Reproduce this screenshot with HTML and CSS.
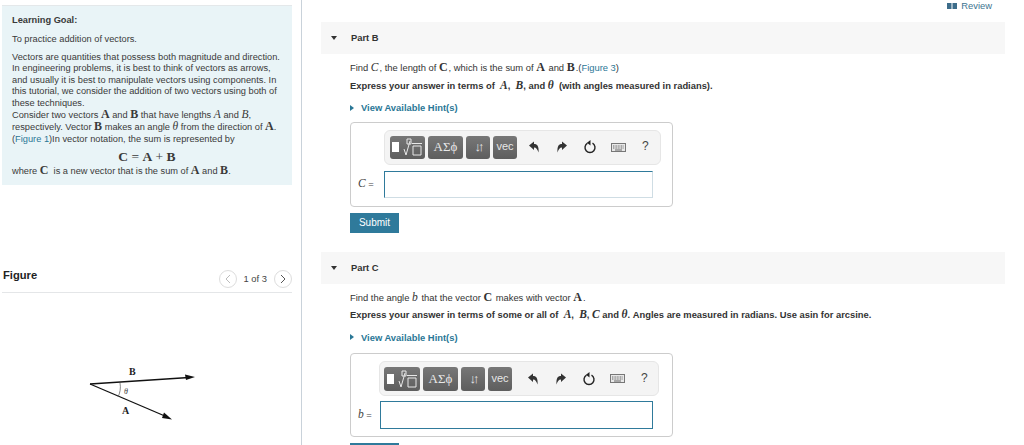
FILE: index.html
```html
<!DOCTYPE html>
<html lang="en">
  <head>
    <meta charset="UTF-8" />
    <meta name="viewport" content="width=device-width, initial-scale=1.0" />
    <title>Addition of vectors</title>
    <link rel="stylesheet" href="styles.css">
  </head>
  <body>
    <div class="page">
      <div class="left">
        <div class="goal">
          <p class="goal-title">Learning Goal:</p>
          <p class="goal-line">To practice addition of vectors.</p>
          <p class="goal-text">
            Vectors are quantities that possess both magnitude and direction.<br />
            In engineering problems, it is best to think of vectors as arrows,<br />
            and usually it is best to manipulate vectors using components. In<br />
            this tutorial, we consider the addition of two vectors using both of<br />
            these techniques.<br />
            Consider two vectors <b class="vec">A</b> and <b class="vec">B</b> that have lengths <i class="var">A</i> and <i class="var">B</i>,<br />
            respectively. Vector <b class="vec">B</b> makes an angle <i class="var">θ</i> from the direction of <b class="vec">A</b>.<br />
            (<a href="#">Figure 1</a>)In vector notation, the sum is represented by
          </p>
          <p class="equation"><b>C</b> = <b>A</b> + <b>B</b></p>
          <p class="goal-where">where <b class="vec">C</b> &nbsp;is a new vector that is the sum of <b class="vec">A</b> and <b class="vec">B</b>.</p>
        </div>
        <div class="figure-head">
          <span class="figure-title">Figure</span>
          <div class="pager">
            <span class="pager-btn">
              <svg width="8" height="10" viewBox="0 0 8 10"><path d="M6 1 2 5l4 4" fill="none" stroke="#bbb" stroke-width="1" /></svg>
            </span>
            <span class="pager-count">1 of 3</span>
            <span class="pager-btn">
              <svg width="8" height="10" viewBox="0 0 8 10"><path d="M2 1l4 4-4 4" fill="none" stroke="#555" stroke-width="1" /></svg>
            </span>
          </div>
        </div>
        <svg class="figure-img" width="292" height="150" viewBox="0 294 292 150">
          <path d="M88 385 187 378.500" stroke="#111" stroke-width="1.300" fill="none" />
          <path d="M193 378 183 375.500 184 381z" fill="#111" />
          <path d="M88 385 164 417.500" stroke="#111" stroke-width="1.300" fill="none" />
          <path d="M170 420.500 162 413.500 160 419z" fill="#111" />
          <path d="M118 384c1 5 0 10-2 14" stroke="#555" stroke-width=".7" fill="none" />
          <text x="127" y="376" class="fig-label">B</text>
          <text x="120" y="415" class="fig-label">A</text>
          <text x="122" y="395" class="fig-angle">θ</text>
        </svg>
      </div>

      <div class="right">
        <div class="review">
          <svg width="10" height="6" viewBox="0 0 10 6"><path d="M0 0h4.500v6H0zM5.500 0H10v6H5.500z" fill="#3d6d8a" /></svg>
          <span>Review</span>
        </div>

        <div class="part-bar">
          <span class="caret"></span>
          <span class="part-name">Part B</span>
        </div>
        <div class="part-body">
          <p class="question">Find <i class="var">C</i>, the length of <b class="vec">C</b>, which is the sum of <b class="vec">A</b> and <b class="vec">B</b>.(<a href="#">Figure 3</a>)</p>
          <p class="instruct">Express your answer in terms of &nbsp;<i class="var">A</i>, &nbsp;<i class="var">B</i>, and <i class="var">θ</i> &nbsp;(with angles measured in radians).</p>
          <p class="hint"><span class="hint-caret"></span>View Available Hint(s)</p>
          <div class="answer">
            <div class="toolbar">
              <span class="tool tool-tpl">
                <span class="tpl-block"></span>
                <svg width="22" height="18" viewBox="0 0 22 18">
                  <path d="M6 1h4v5H6zM11 5.500h10M3 11l2 6 4-14M12 8h8v9h-8z" fill="none" stroke="#e8e8e8" stroke-width="1" />
                </svg>
              </span>
              <span class="tool tool-sym">ΑΣϕ</span>
              <span class="tool tool-arrows">↓↑</span>
              <span class="tool tool-vec">vec</span>
              <span class="actions">
                <svg class="icon" width="14" height="14" viewBox="0 0 14 14"><path d="M2 5.500 7 1.500v2.500c3.500 0 5 2.500 4.500 8.500C10.500 9.500 9.500 7.500 7 7.500v2.500z" fill="#333" /></svg>
                <svg class="icon" width="14" height="14" viewBox="0 0 14 14"><path d="M12 5.500 7 1.500v2.500c-3.500 0-5 2.500-4.500 8.500C3.500 9.500 4.500 7.500 7 7.500v2.500z" fill="#333" /></svg>
                <svg class="icon" width="14" height="14" viewBox="0 0 14 14"><path d="M4.500 3.200a5 5 0 1 0 5 0" fill="none" stroke="#222" stroke-width="1.400" /><path d="M7.500 0v5.500L4 2.800z" fill="#222" /></svg>
                <svg class="icon" width="15" height="9" viewBox="0 0 15 9"><rect x=".5" y=".5" width="14" height="8" fill="#e8e8e8" stroke="#777" /><path d="M2 3h11M2 5h11" stroke="#666" stroke-dasharray="1 .6" /><path d="M4 7h7" stroke="#666" /></svg>
                <span class="help">?</span>
              </span>
            </div>
            <div class="answer-row">
              <span class="answer-label"><i class="var">C</i> =</span>
              <span class="answer-input"></span>
            </div>
          </div>
          <button class="submit">Submit</button>
        </div>

        <div class="part-bar part-c">
          <span class="caret"></span>
          <span class="part-name">Part C</span>
        </div>
        <div class="part-body">
          <p class="question">Find the angle <i class="var">b</i> that the vector <b class="vec">C</b> makes with vector <b class="vec">A</b>.</p>
          <p class="instruct">Express your answer in terms of some or all of &nbsp;<i class="var">A</i>, &nbsp;<i class="var">B</i>, <i class="var">C</i> and <i class="var">θ</i>. Angles are measured in radians. Use asin for arcsine.</p>
          <p class="hint"><span class="hint-caret"></span>View Available Hint(s)</p>
          <div class="answer answer-c">
            <div class="toolbar">
              <span class="tool tool-tpl">
                <span class="tpl-block"></span>
                <svg width="22" height="18" viewBox="0 0 22 18">
                  <path d="M6 1h4v5H6zM11 5.500h10M3 11l2 6 4-14M12 8h8v9h-8z" fill="none" stroke="#e8e8e8" stroke-width="1" />
                </svg>
              </span>
              <span class="tool tool-sym">ΑΣϕ</span>
              <span class="tool tool-arrows">↓↑</span>
              <span class="tool tool-vec">vec</span>
              <span class="actions">
                <svg class="icon" width="14" height="14" viewBox="0 0 14 14"><path d="M2 5.500 7 1.500v2.500c3.500 0 5 2.500 4.500 8.500C10.500 9.500 9.500 7.500 7 7.500v2.500z" fill="#333" /></svg>
                <svg class="icon" width="14" height="14" viewBox="0 0 14 14"><path d="M12 5.500 7 1.500v2.500c-3.500 0-5 2.500-4.500 8.500C3.500 9.500 4.500 7.500 7 7.500v2.500z" fill="#333" /></svg>
                <svg class="icon" width="14" height="14" viewBox="0 0 14 14"><path d="M4.500 3.200a5 5 0 1 0 5 0" fill="none" stroke="#222" stroke-width="1.400" /><path d="M7.500 0v5.500L4 2.800z" fill="#222" /></svg>
                <svg class="icon" width="15" height="9" viewBox="0 0 15 9"><rect x=".5" y=".5" width="14" height="8" fill="#e8e8e8" stroke="#777" /><path d="M2 3h11M2 5h11" stroke="#666" stroke-dasharray="1 .6" /><path d="M4 7h7" stroke="#666" /></svg>
                <span class="help">?</span>
              </span>
            </div>
            <div class="answer-row">
              <span class="answer-label"><i class="var">b</i> =</span>
              <span class="answer-input"></span>
            </div>
          </div>
          <button class="submit" aria-label="Submit"></button>
        </div>
      </div>
    </div>
  </body>
</html>
```

FILE: styles.css
```css
html,
body {
  margin: 0;
  height: 445px;
  overflow: hidden;
  background: #fff;
}

body {
  font-family: "Liberation Sans", Arial, sans-serif;
  font-size: 9.4px;
  line-height: 11.500px;
  color: #333;
}

p {
  margin: 0;
}

a {
  color: #2a7796;
  text-decoration: none;
}

.page {
  display: flex;
  height: 445px;
}

.left {
  width: 290px;
  margin-left: 2px;
  padding-top: 5px;
  padding-right: 9px;
  border-right: 1px solid #c9d2da;
  flex: none;
}

.vec {
  font-family: "Liberation Serif", serif;
  font-weight: bold;
  font-size: 12px;
  line-height: 10px;
}

.var {
  font-family: "Liberation Serif", serif;
  font-style: italic;
  font-size: 11.500px;
  line-height: 10px;
}

.goal {
  height: 170px;
  padding: 9px 0 0 10px;
  background: #e9f4f7;
  border-top: 1px solid #e4e8ea;
  color: #3a3a3a;
  font-size: 9.25px;
}

.goal-title {
  font-weight: bold;
}

.goal-line {
  margin-top: 7px;
}

.goal-text {
  margin-top: 7px;
  line-height: 11.400px;
}

.equation {
  margin-top: 5px;
  padding-right: 10px;
  text-align: center;
  font-family: "Liberation Serif", serif;
  font-size: 13.500px;
  line-height: 13px;
}

.goal-where {
  margin-top: 2px;
}

.figure-head {
  display: flex;
  align-items: center;
  justify-content: space-between;
  height: 27px;
  margin-top: 80px;
  padding-left: 1px;
  border-bottom: 1px solid #e4e6e8;
}

.figure-title {
  margin-bottom: 5px;
  font-size: 11.200px;
  font-weight: bold;
  color: #222;
}

.pager {
  display: flex;
  align-items: center;
  gap: 7px;
}

.pager-count {
  color: #444;
}

.pager-btn {
  display: flex;
  align-items: center;
  justify-content: center;
  box-sizing: border-box;
  width: 18px;
  height: 18px;
  border: 1px solid #ddd;
  border-radius: 50%;
}

.figure-img {
  display: block;
}

.fig-label {
  font-family: "Liberation Serif", serif;
  font-size: 10px;
  font-weight: bold;
  fill: #222;
}

.fig-angle {
  font-family: "Liberation Serif", serif;
  font-size: 8px;
  font-style: italic;
  fill: #444;
}

.right {
  flex: 1;
  padding: 0 19px 0 19px;
}

.review {
  display: flex;
  align-items: center;
  justify-content: flex-end;
  gap: 4px;
  height: 22px;
  padding: 0 13px 10px 0;
  box-sizing: border-box;
  color: #3d7490;
}

.part-bar {
  display: flex;
  align-items: center;
  height: 32px;
  background: #f7f7f7;
  color: #333;
  font-weight: bold;
}

.part-c {
  margin-top: 19px;
}

.caret {
  width: 0;
  height: 0;
  margin: 0 13px 0 10px;
  border-left: 3.500px solid transparent;
  border-right: 3.500px solid transparent;
  border-top: 4px solid #333;
}

.part-name {
  margin-left: 1px;
}

.part-body {
  padding: 8px 0 0 29px;
}

.question {
  height: 11.500px;
}

.question .vec,
.question .var {
  margin-right: 1px;
}

.instruct {
  margin-top: 6px;
  font-weight: bold;
}

.hint {
  display: flex;
  align-items: center;
  margin-top: 11px;
  color: #2a7796;
  font-weight: bold;
}

.hint-caret {
  width: 0;
  height: 0;
  margin-right: 7px;
  border-top: 3.500px solid transparent;
  border-bottom: 3.500px solid transparent;
  border-left: 4px solid #2a7796;
}

.answer {
  box-sizing: border-box;
  width: 323px;
  height: 85px;
  margin-top: 8px;
  padding: 7px 19px 0 33px;
  border: 1px solid #ccc;
  border-radius: 4px;
}

.toolbar {
  display: flex;
  align-items: center;
  box-sizing: border-box;
  width: 277px;
  height: 35px;
  padding-left: 5px;
  gap: 3px;
  background: #f4f4f4;
  border: 1px solid #e6e6e6;
  border-radius: 6px;
}

.tool {
  display: flex;
  align-items: center;
  justify-content: center;
  height: 23px;
  border-radius: 3px;
  background: linear-gradient(#777, #5e5e5e);
  color: #e8e8e8;
}

.tool-tpl {
  width: 35px;
  gap: 2px;
}

.tpl-block {
  width: 7px;
  height: 10px;
  background: #fff;
}

.tool-sym {
  width: 35px;
  font-family: "Liberation Serif", serif;
  font-size: 13px;
}

.tool-arrows {
  width: 24px;
  font-size: 13px;
  letter-spacing: -3px;
}

.tool-vec {
  width: 24px;
  font-size: 11px;
}

.actions {
  display: flex;
  align-items: center;
  gap: 14px;
  margin-left: 7px;
}

.help {
  margin-left: 2px;
  font-size: 12px;
  color: #444;
}

.answer-row {
  display: flex;
  align-items: center;
  margin: 6px 0 0 -26px;
}

.answer-label {
  width: 26px;
  color: #444;
}

.answer-input {
  box-sizing: border-box;
  width: 270px;
  height: 27px;
  background: #fff;
  border: 1px solid #cfdde4;
  border-top-color: #2f7a9b;
  border-left-color: #2f7a9b;
}

.answer-c {
  padding-left: 28px;
  height: 84px;
  margin-top: 10px;
}

.answer-c .toolbar {
  width: 280px;
  padding-left: 4px;
}

.answer-c .tool {
  height: 24px;
}

.answer-c .tool-tpl {
  width: 36px;
}

.answer-c .actions {
  margin-left: 11px;
}

.answer-c .answer-row {
  margin: 5px 0 0 -21px;
}

.answer-c .answer-label {
  width: 22px;
}

.answer-c .answer-input {
  width: 273px;
  height: 28px;
  border-color: #2f7a9b;
}

.submit {
  display: block;
  width: 49px;
  height: 20px;
  margin-top: 6px;
  padding: 0;
  background: #2f7a9b;
  border: none;
  color: #fff;
  font-family: "Liberation Sans", Arial, sans-serif;
  font-size: 10px;
}
```
